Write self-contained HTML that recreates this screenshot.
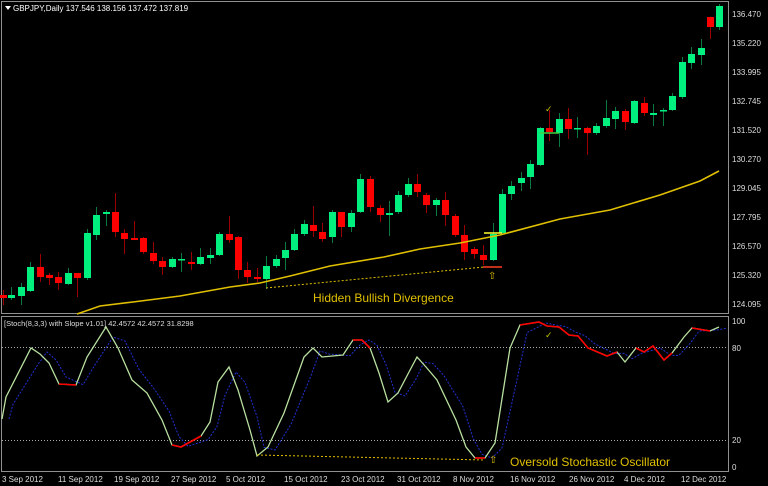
<!DOCTYPE html>
<html><head><meta charset="utf-8"><style>
html,body{margin:0;padding:0;background:#000;width:768px;height:486px;overflow:hidden}
svg{display:block}
text{font-family:"Liberation Sans",sans-serif}
</style></head><body>
<svg id="s" width="768" height="486" xmlns="http://www.w3.org/2000/svg">
<rect width="768" height="486" fill="#000"/>
<rect x="1.5" y="1.5" width="727" height="312" fill="none" stroke="#909090"/>
<rect x="1.5" y="316.5" width="727" height="155" fill="none" stroke="#909090"/>
<polygon points="5,6 11,6 8,10" fill="#fff"/>
<text x="13" y="11" font-size="8" fill="#fff">GBPJPY,Daily  137.546 138.156 137.472 137.819</text>
<text x="4" y="326" font-size="7.5" fill="#ddd">[Stoch(8,3,3) with Slope v1.01] 42.4572 42.4572 31.8298</text>
<g id="c"></g>
<polyline points="77,314 100,306 133,302 180,296 230,287 260,283 290,276 330,266 384,257 420,249 460,243 500,235 560,219 610,210 660,195 700,181 719,171" fill="none" stroke="#e0c000" stroke-width="1.6"/>
<line x1="266" y1="288" x2="484" y2="267" stroke="#e0c000" stroke-dasharray="2,2"/>
<line x1="483" y1="267" x2="502" y2="267" stroke="#ff4020" stroke-width="1.5"/>
<line x1="484" y1="233" x2="502" y2="233" stroke="#ffff30" stroke-width="1.5"/>
<line x1="540" y1="133" x2="559" y2="133" stroke="#40d040" stroke-width="1.5"/>
<text x="488" y="279" font-size="10" fill="#e0c000">⇧</text>
<text x="545" y="112" font-size="9" fill="#c0c000">✓</text>
<text x="313" y="302" font-size="12" fill="#e0c000">Hidden Bullish Divergence</text>
<g font-size="8" fill="#ddd">
<text x="732" y="17">136.470</text><text x="732" y="46">135.220</text><text x="732" y="75">133.995</text><text x="732" y="104">132.745</text><text x="732" y="133">131.520</text><text x="732" y="162">130.270</text><text x="732" y="191">129.045</text><text x="732" y="220">127.795</text><text x="732" y="249">126.570</text><text x="732" y="278">125.320</text><text x="732" y="307">124.095</text>
<text x="732" y="324">100</text><text x="732" y="351">80</text><text x="732" y="443">20</text><text x="732" y="470">0</text>
<text x="2" y="482">3 Sep 2012</text><text x="58" y="482">11 Sep 2012</text><text x="114" y="482">19 Sep 2012</text><text x="171" y="482">27 Sep 2012</text><text x="226" y="482">5 Oct 2012</text><text x="284" y="482">15 Oct 2012</text><text x="341" y="482">23 Oct 2012</text><text x="397" y="482">31 Oct 2012</text><text x="453" y="482">8 Nov 2012</text><text x="510" y="482">16 Nov 2012</text><text x="569" y="482">26 Nov 2012</text><text x="624" y="482">4 Dec 2012</text><text x="681" y="482">12 Dec 2012</text>
</g>
<line x1="2" y1="347.5" x2="728" y2="347.5" stroke="#aaa" stroke-dasharray="1,2"/>
<line x1="2" y1="440.5" x2="728" y2="440.5" stroke="#aaa" stroke-dasharray="1,2"/>
<polyline id="sig" fill="none" stroke="#2030d0" stroke-dasharray="2,1.5"/>
<polyline id="main" fill="none" stroke="#b8e0a0" stroke-width="1.3"/>
<g id="red" stroke="#ff0000" stroke-width="1.6" fill="none"></g>
<line x1="257" y1="455" x2="485" y2="460" stroke="#e0c000" stroke-dasharray="2,2"/>
<text x="489" y="463" font-size="10" fill="#e0c000">⇧</text>
<text x="545" y="338" font-size="9" fill="#c0c000">✓</text>
<text x="510" y="466" font-size="12" fill="#e0c000">Oversold Stochastic Oscillator</text>
</svg>
<script>
var C=[[3,'r',295,298,290,305],[11,'g',295,298,287,300],[21,'g',287,296,283,305],[30,'g',267,291,262,292],[40,'r',267,277,254,282],[49,'r',275,278,273,285],[58,'r',277,283,272,290],[68,'g',273,284,268,285],[77,'r',273,278,273,297],[87,'g',233,278,229,280],[96,'g',215,235,207,240],[106,'g',212,214,210,226],[115,'r',212,232,193,237],[124,'r',233,239,229,254],[134,'r',238,240,221,240],[143,'r',238,252,237,254],[153,'r',253,261,242,264],[162,'r',261,267,257,275],[172,'g',259,267,257,268],[181,'g',259,260,253,272],[191,'r',262,264,252,270],[200,'g',257,264,248,265],[210,'g',255,258,248,264],[219,'g',234,255,232,256],[229,'r',234,240,216,243],[238,'r',237,270,236,279],[247,'r',270,277,262,283],[257,'r',277,279,268,282],[266,'g',266,279,256,289],[276,'g',259,266,255,268],[285,'g',250,258,242,270],[294,'g',234,250,229,251],[304,'g',224,234,220,236],[313,'r',225,231,206,237],[322,'r',232,239,223,242],[332,'g',212,237,210,243],[341,'r',212,227,212,237],[351,'g',213,227,210,232],[360,'g',179,212,174,213],[370,'r',179,207,176,212],[380,'r',208,215,205,222],[389,'g',213,215,201,236],[398,'g',195,212,191,214],[408,'g',184,195,178,197],[417,'r',184,192,174,197],[426,'r',195,205,193,213],[436,'g',200,205,198,216],[445,'r',200,215,192,226],[455,'r',216,235,214,237],[464,'r',235,252,225,260],[474,'r',249,254,247,259],[483,'r',255,260,245,265],[493,'g',234,260,223,261],[502,'g',194,233,189,234],[511,'g',186,194,181,200],[521,'g',178,183,172,191],[530,'g',164,177,160,189],[540,'g',128,165,127,166],[549,'r',128,132,110,141],[559,'g',119,133,113,147],[568,'r',119,129,108,139],[577,'g',128,129,117,138],[587,'r',128,133,127,155],[596,'g',126,133,123,135],[606,'g',118,126,100,128],[615,'g',111,119,107,129],[625,'r',111,122,109,130],[634,'g',101,123,100,124],[644,'r',103,113,97,116],[653,'g',113,115,104,126],[663,'g',110,111,108,126],[672,'g',96,110,93,111],[682,'g',62,97,57,99],[691,'g',54,63,47,69],[701,'g',48,55,39,65],[710,'r',17,27,17,39],[719,'g',6,27,4,30]];
var h='';C.forEach(function(c){var col=c[1]=='g'?'#00f080':'#ff0000',wc=c[1]=='g'?'#0a7a40':'#9a0000';
h+='<line x1="'+c[0]+'.5" y1="'+c[4]+'" x2="'+c[0]+'.5" y2="'+c[5]+'" stroke="'+wc+'"/>';
h+='<rect x="'+(c[0]-3)+'" y="'+c[2]+'" width="7" height="'+Math.max(1.5,c[3]-c[2])+'" fill="'+col+'"/>';});
document.getElementById('c').innerHTML=h;
var M=[[2,419],[6,397],[31,348],[40,354],[49,363],[59,384],[76,385],[87,357],[106,327],[118,348],[132,380],[147,393],[162,420],[172,445],[181,447],[201,436],[210,422],[218,382],[229,367],[238,390],[250,430],[257,456],[268,447],[284,413],[304,357],[313,348],[322,357],[343,355],[353,340],[362,340],[370,348],[379,373],[388,402],[398,393],[409,372],[417,357],[426,367],[437,380],[456,420],[466,447],[475,458],[485,458],[495,443],[510,348],[520,325],[539,322],[547,326],[559,327],[569,335],[578,336],[588,348],[607,356],[617,352],[625,362],[636,348],[644,352],[653,346],[664,360],[672,353],[684,337],[692,328],[710,331],[719,327]];
document.getElementById('main').setAttribute('points',M.map(function(p){return p.join(',')}).join(' '));
var S=[];for(var i=0;i<M.length;i++){var a=M[Math.max(0,i-1)],b=M[i];S.push([b[0]+7,(a[1]+b[1]*2)/3]);}
document.getElementById('sig').setAttribute('points',S.map(function(p){return p.join(',')}).join(' '));
var R=[[[59,384],[76,385]],[[172,445],[181,447],[201,436]],[[353,340],[362,340],[370,348]],[[475,458],[485,458]],[[520,325],[539,322],[547,326],[559,327],[569,335],[578,336],[588,348],[607,356],[617,352]],[[636,348],[644,352],[653,346],[664,360],[672,353]],[[692,328],[710,331]]];
var r='';R.forEach(function(s){r+='<polyline points="'+s.map(function(p){return p.join(',')}).join(' ')+'"/>';});
document.getElementById('red').innerHTML=r;
</script>
</body></html>
